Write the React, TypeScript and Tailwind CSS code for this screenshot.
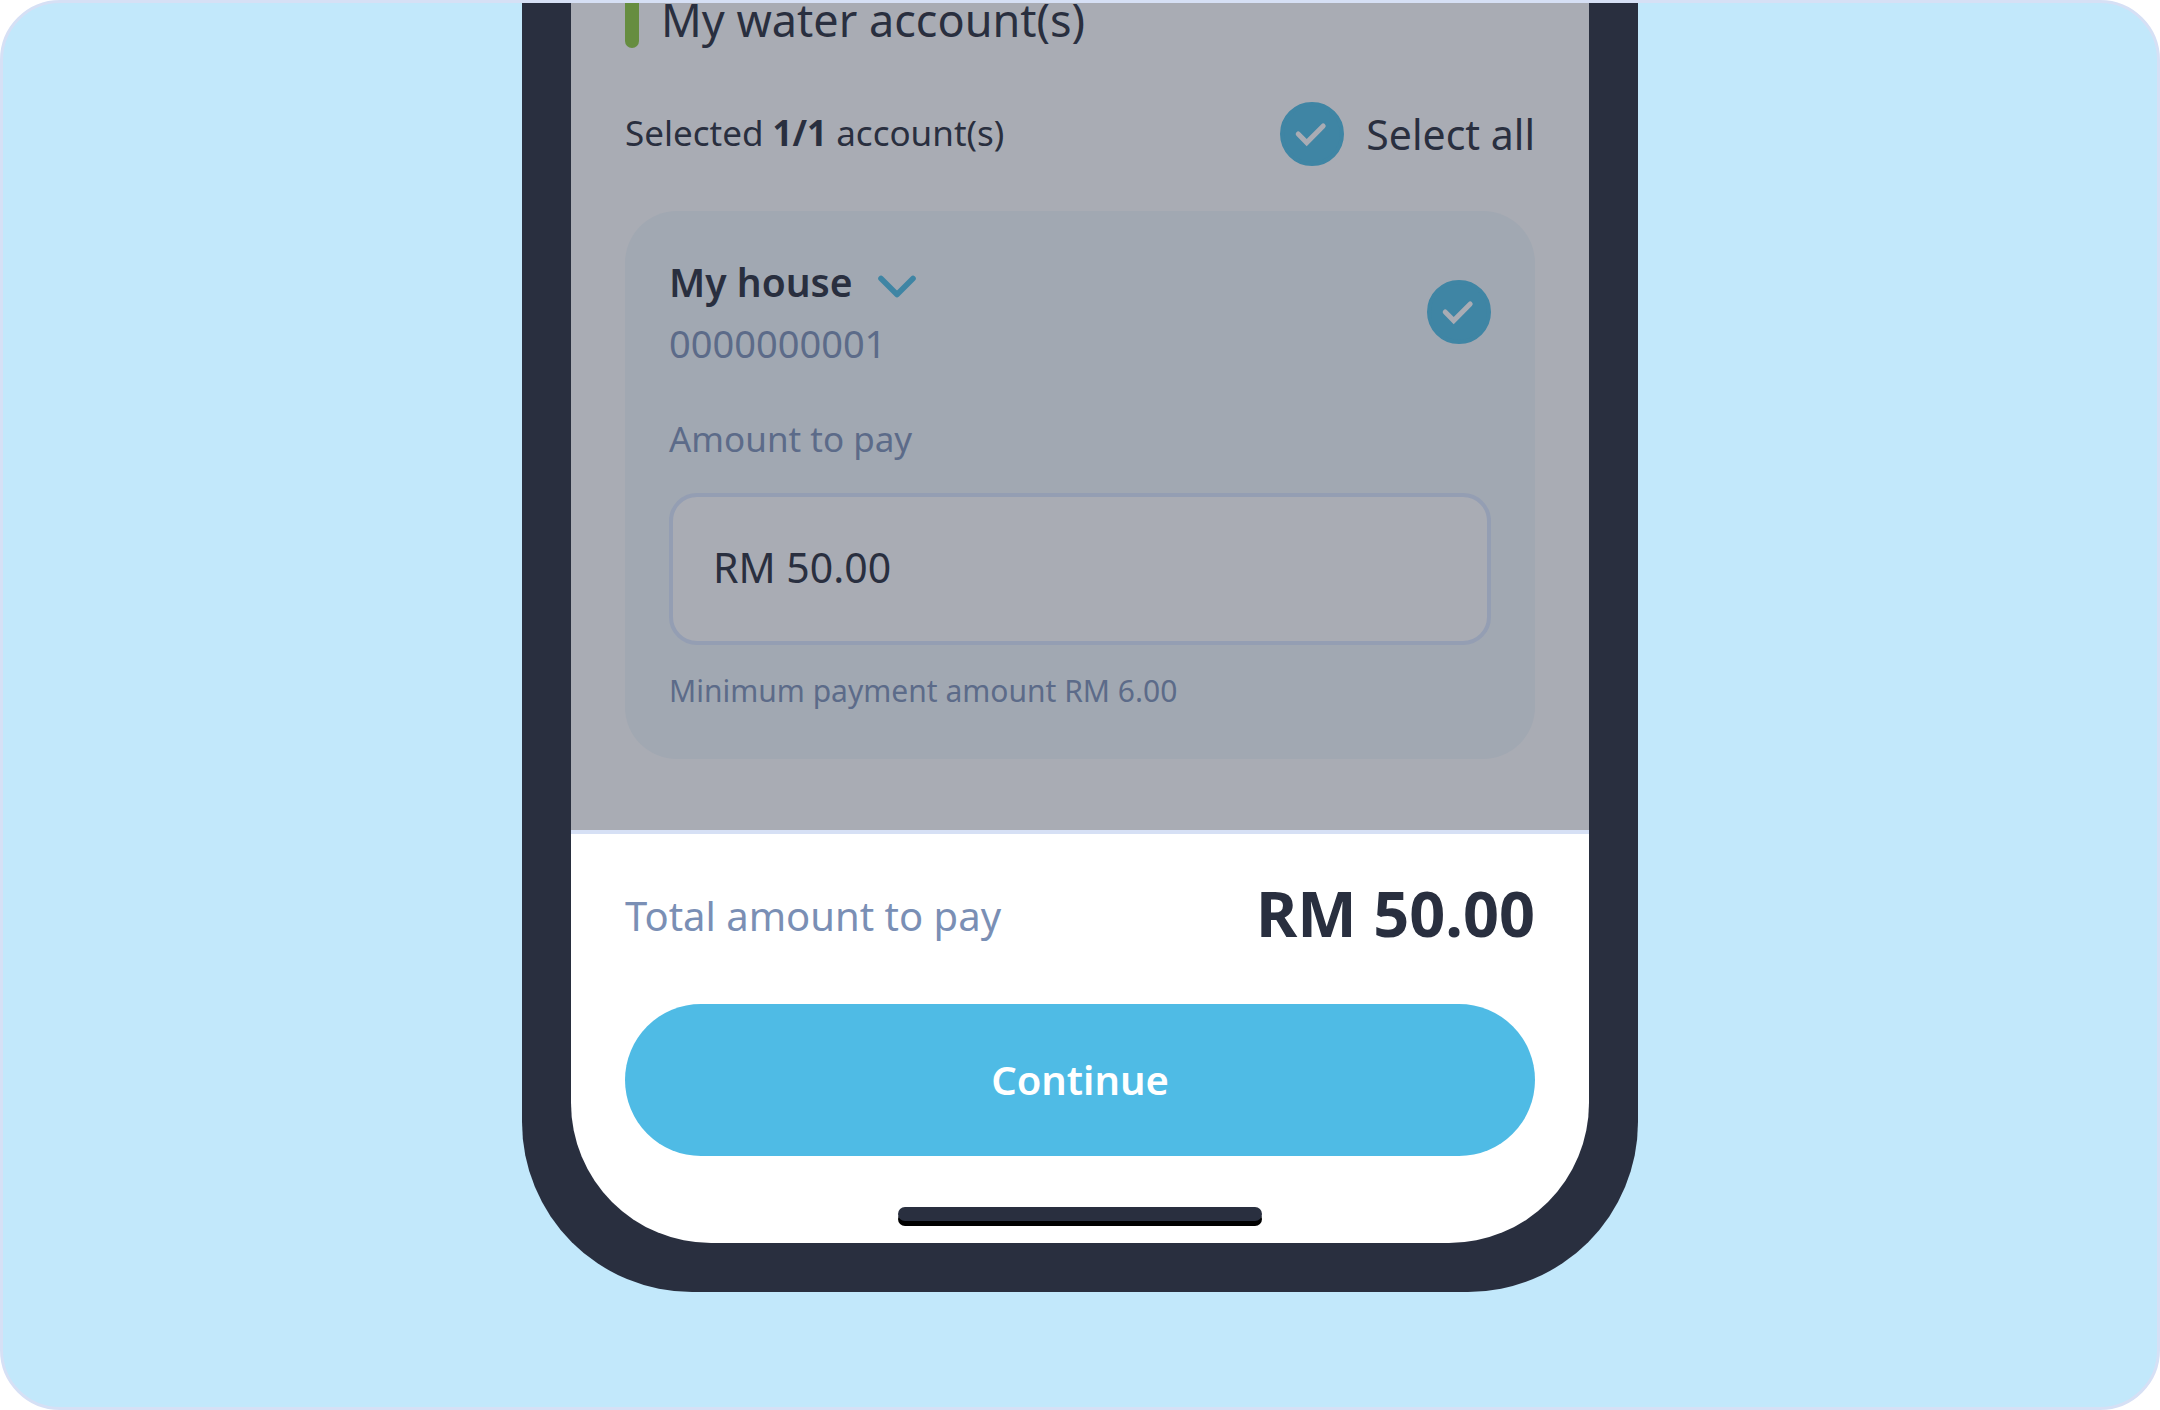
import React, { useState } from 'react';

interface CheckCircleProps {
  id: string;
  label?: string;
  checked: boolean;
  onChange: (checked: boolean) => void;
}

const CheckCircle: React.FC<CheckCircleProps> = ({ id, label, checked, onChange }) => (
  <span className="grid size-16 shrink-0">
    <input
      id={id}
      type="checkbox"
      aria-label={label}
      checked={checked}
      onChange={(e) => onChange(e.target.checked)}
      className="col-start-1 row-start-1 size-16 cursor-pointer appearance-none rounded-full border-4 border-[#3f85a4] checked:bg-[#3f85a4]"
    />
    {checked && (
      <svg viewBox="0 0 64 64" fill="none" aria-hidden="true" className="pointer-events-none col-start-1 row-start-1 size-16">
        <path
          d="M18.2 32L26.7 40.6L43.2 24"
          stroke="#a9acb4"
          strokeWidth="5"
          strokeLinecap="round"
          strokeLinejoin="miter"
        />
      </svg>
    )}
  </span>
);

const ChevronDown = () => (
  <svg width="40" height="32" viewBox="0 0 40 32" fill="none" aria-hidden="true">
    <path d="M4 12.5L20 28.5L36 12.5" stroke="#3f85a4" strokeWidth="5.6" strokeLinecap="round" strokeLinejoin="round" />
  </svg>
);

export default function App() {
  const [selected, setSelected] = useState(true);
  const [amount, setAmount] = useState('RM 50.00');

  return (
    <div className="min-h-screen overflow-hidden rounded-[60px] border-[3px] border-[#d6e0f5] bg-[#c2e8fb] font-['Noto_Sans',sans-serif] text-[#292f3f]">
      {/* Phone */}
      <main className="mx-auto w-full max-w-[1116px] rounded-b-[170px] bg-[#292f3f] px-[49px] pb-[49px]">
        <div className="overflow-hidden rounded-b-[140px] bg-white">
          {/* Dimmed account list */}
          <section className="bg-[#a9acb4] px-[54px] pb-[71px]">
            <div className="flex gap-[22px]">
              <span className="w-3.5 rounded-b-full bg-[#668d40]" />
              <h1 className="pb-[11px] text-[45px] leading-[34px]">My water account(s)</h1>
            </div>

            <div className="mt-[54px] flex items-start justify-between">
              <p className="text-[35px] leading-[62px]">
                Selected <strong className="font-bold">{selected ? '1/1' : '0/1'}</strong> account(s)
              </p>
              <div className="flex items-center gap-[22px]">
                <CheckCircle id="select-all" checked={selected} onChange={setSelected} />
                <label htmlFor="select-all" className="cursor-pointer text-[41px] leading-[62px]">
                  Select all
                </label>
              </div>
            </div>

            <div className="mt-[45px] rounded-[52px] bg-[#a1a8b2] px-11 pt-10 pb-[46px]">
              <div className="flex items-center justify-between">
                <div>
                  <button type="button" className="flex items-center gap-6 text-[39px] leading-[62px] font-semibold">
                    My house
                    <ChevronDown />
                  </button>
                  <p className="text-[38px] leading-[60px] text-[#5c6b89]">0000000001</p>
                </div>
                <CheckCircle id="my-house" label="My house" checked={selected} onChange={setSelected} />
              </div>

              <label htmlFor="amount" className="mt-10 block text-[35px] leading-[52px] text-[#5c6b89]">
                Amount to pay
              </label>
              <input
                id="amount"
                type="text"
                value={amount}
                onChange={(e) => setAmount(e.target.value)}
                className="mt-7 block h-[152px] w-full rounded-[28px] border-4 border-[#949eb3] bg-[#a9acb4] px-10 pb-1 text-[41px] outline-none"
              />
              <p className="mt-6 text-[30px] leading-[44px] text-[#5c6b89]">Minimum payment amount RM 6.00</p>
            </div>
          </section>

          {/* Payment footer */}
          <section className="border-t-4 border-[#d6e0f5] px-[54px] pt-9 pb-[22px]">
            <div className="flex items-end justify-between">
              <span className="text-[40px] leading-[80px] text-[#7a8fb5]">Total amount to pay</span>
              <span className="text-[63px] leading-[86px] font-bold">{amount}</span>
            </div>
            <button
              type="button"
              className="mt-12 h-[152px] w-full rounded-full bg-[#4fbbe5] text-[40px] font-semibold text-white"
            >
              Continue
            </button>
            <div className="mx-auto mt-[51px] h-3.5 w-[364px] max-w-full rounded-[7px] bg-[#292f3f] shadow-[0_5px_0_#000]" />
          </section>
        </div>
      </main>
    </div>
  );
}
